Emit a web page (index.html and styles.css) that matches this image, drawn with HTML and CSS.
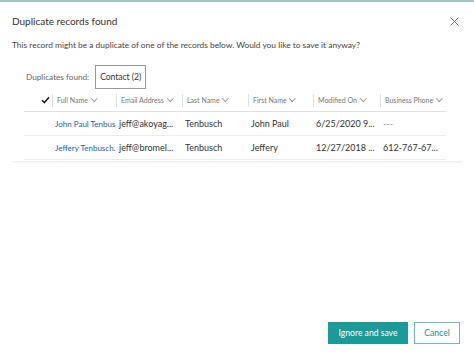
FILE: index.html
```html
<!DOCTYPE html>
<html lang="en">
<head>
    <meta charset="UTF-8">
    <title>Duplicate records found</title>
    <link rel="stylesheet" href="styles.css">
</head>
<body>
    <div class="topbar"></div>
    <div class="dialog">
        <div class="dialog-head">
            <h1>Duplicate records found</h1>
            <button class="close-btn" aria-label="Close">
                <svg width="9" height="9" viewBox="0 0 9 9"><path d="M0.5 0.5L8.5 8.5M8.5 0.5L0.5 8.5" stroke="#666" stroke-width="1" fill="none"/></svg>
            </button>
        </div>
        <p class="subtitle">This record might be a duplicate of one of the records below. Would you like to save it anyway?</p>

        <div class="grid-wrap">
            <div class="filter">
                <span class="filter-label">Duplicates found:</span>
                <span class="filter-tab">Contact (2)</span>
            </div>

            <div class="grid">
                <div class="row head">
                    <div class="cell check">
                        <svg width="9" height="8" viewBox="0 0 9 8"><path d="M1 4.2L3.4 6.6L8 1.2" stroke="#222" stroke-width="1.5" fill="none"/></svg>
                    </div>
                    <div class="cell">Full Name <span class="chev"></span></div>
                    <div class="cell">Email Address <span class="chev"></span></div>
                    <div class="cell">Last Name <span class="chev"></span></div>
                    <div class="cell">First Name <span class="chev"></span></div>
                    <div class="cell">Modified On <span class="chev"></span></div>
                    <div class="cell">Business Phone <span class="chev"></span></div>
                </div>
                <div class="row">
                    <div class="cell check"></div>
                    <div class="cell link">John Paul Tenbus</div>
                    <div class="cell">jeff@akoyag...</div>
                    <div class="cell">Tenbusch</div>
                    <div class="cell">John Paul</div>
                    <div class="cell">6/25/2020 9...</div>
                    <div class="cell muted">---</div>
                </div>
                <div class="row">
                    <div class="cell check"></div>
                    <div class="cell link">Jeffery Tenbusch.</div>
                    <div class="cell">jeff@bromel...</div>
                    <div class="cell">Tenbusch</div>
                    <div class="cell">Jeffery</div>
                    <div class="cell">12/27/2018 ...</div>
                    <div class="cell">612-767-67...</div>
                </div>
            </div>
        </div>

        <div class="actions">
            <button class="btn primary">Ignore and save</button>
            <button class="btn secondary">Cancel</button>
        </div>
    </div>
</body>
</html>
```

FILE: styles.css
```css
html, body {
    margin: 0;
    padding: 0;
    background: #fff;
    font-family: Lato, "Open Sans", sans-serif;
    color: #333;
}
.topbar {
    height: 2px;
    background-color: #a6c4c3;
}
.dialog {
    height: 354px;
    display: flex;
    flex-direction: column;
    box-sizing: border-box;
    padding: 0 12px;
}
.dialog-head {
    display: flex;
    align-items: center;
    justify-content: space-between;
    height: 38px;
}
.dialog-head h1 {
    margin: 0;
    font-size: 10px;
    font-weight: normal;
    color: #333;
}
.close-btn {
    border: none;
    background: none;
    padding: 0;
    margin-right: 3px;
    display: flex;
}
.subtitle {
    margin: 0;
    font-size: 8.4px;
    color: #444;
    line-height: 10px;
}
.grid-wrap {
    margin-top: 15px;
    padding: 0 12px 1px;
    border-bottom: 1px solid #f0f0f0;
    box-shadow: 0 1px 2px rgba(0, 0, 0, 0.04);
}
.filter {
    display: flex;
    align-items: center;
    height: 24px;
}
.filter-label {
    font-size: 8.2px;
    color: #666;
    margin-left: 2px;
}
.filter-tab {
    margin-left: 6px;
    border: 1px solid #999;
    padding: 0 4px;
    height: 22px;
    line-height: 22px;
    font-size: 8.5px;
    color: #333;
}
.grid {
    width: 422px;
}
.row {
    display: grid;
    grid-template-columns: 28px 64px 66px 66px 65px 67px 66px;
    height: 24px;
    align-items: center;
    border-bottom: 1px solid #ececec;
    box-sizing: border-box;
}
.row.head {
    height: 23px;
    border-bottom: 1px solid #e1e1e1;
}
.cell {
    font-size: 9px;
    color: #333;
    white-space: nowrap;
    overflow: hidden;
    padding-left: 3px;
}
.head .cell {
    font-size: 7px;
    color: #777;
    border-left: 1px solid #e0e0e0;
    padding-left: 4px;
    line-height: 13px;
}
.head .cell.check {
    border-left: none;
    display: flex;
    justify-content: flex-end;
    padding-right: 2px;
}
.chev {
    display: inline-block;
    width: 3.5px;
    height: 3.5px;
    border-right: 1px solid #999;
    border-bottom: 1px solid #999;
    transform: rotate(45deg);
    margin-left: 2px;
    position: relative;
    top: -2px;
}
.cell.link {
    color: #1d62a8;
    font-size: 8px;
    padding-left: 3px;
}
.cell.muted {
    color: #999;
}
.actions {
    margin-top: auto;
    display: flex;
    justify-content: flex-end;
    gap: 6px;
    padding-bottom: 12px;
    padding-right: 2px;
}
.btn {
    height: 22px;
    font-family: inherit;
    font-size: 8.6px;
    padding: 0;
    cursor: pointer;
}
.btn.primary {
    width: 80px;
    background-color: #1a9b98;
    border: none;
    color: #fff;
}
.btn.secondary {
    width: 46px;
    background-color: #fff;
    border: 1px solid #6fb9b8;
    color: #1a8f8c;
}
```
